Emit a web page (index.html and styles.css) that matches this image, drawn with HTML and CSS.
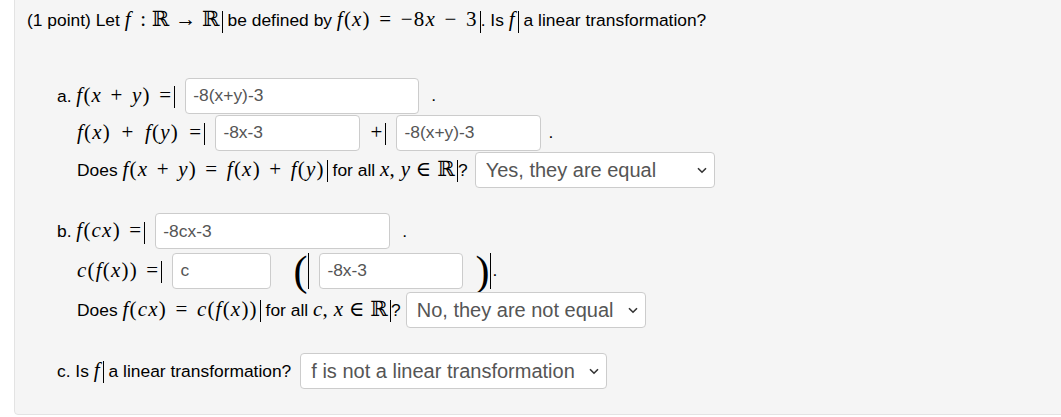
FILE: index.html
```html
<!DOCTYPE html>
<html>
	<head>
		<meta charset="utf-8">
		<meta name="viewport" content="width=device-width, initial-scale=1.0">
		<title>Linear transformation</title>
		<link rel="stylesheet" href="styles.css">
	</head>
	<body>
		<div class="problem">
			<div class="line intro">
				<span class="txt">(1 point) Let <span class="m"><i>f</i> <span class="set">: ℝ → ℝ</span></span><span class="cur"></span> be defined by <span class="m"><i>f</i>(<i>x</i>) = −8<i>x</i> − 3</span><span class="cur"></span>. Is <span class="m"><i>f</i></span><span class="cur"></span> a linear transformation?</span>
			</div>

			<!-- a -->
			<div class="part">
				<div class="line">
					<span class="txt">a. <span class="m"><i>f</i>(<i>x</i> + <i>y</i>) =</span><span class="cur"></span></span>
					<input class="ans w-a1" type="text" value="-8(x+y)-3">
					<span class="dot">.</span>
				</div>
				<div class="line sub">
					<span class="txt"><span class="m wide"><i>f</i>(<i>x</i>) + <i>f</i>(<i>y</i>) =</span><span class="cur"></span></span>
					<input class="ans w-a2" type="text" value="-8x-3">
					<span class="txt"><span class="m">+</span><span class="cur"></span></span>
					<input class="ans w-a2" type="text" value="-8(x+y)-3">
					<span class="dot tight">.</span>
				</div>
				<div class="line sub">
					<span class="txt">Does <span class="m"><i>f</i>(<i>x</i> + <i>y</i>) = <i>f</i>(<i>x</i>) + <i>f</i>(<i>y</i>)</span><span class="cur"></span> for all <span class="m set"><i>x</i>, <i>y</i> ∈ ℝ</span><span class="cur"></span>?</span>
					<span class="sel w-s1">
						<select><option>Yes, they are equal</option></select>
						<svg class="chev" width="10" height="7" viewBox="0 0 10 7"><path d="M1 1.2l4 4 4-4" fill="none" stroke="#333" stroke-width="1.6"/></svg>
					</span>
				</div>
			</div>

			<!-- b -->
			<div class="part">
				<div class="line b1">
					<span class="txt">b. <span class="m"><i>f</i>(<i>cx</i>) =</span><span class="cur"></span></span>
					<input class="ans w-b1" type="text" value="-8cx-3">
					<span class="dot">.</span>
				</div>
				<div class="line sub b2">
					<span class="txt"><span class="m"><i>c</i>(<i>f</i>(<i>x</i>)) =</span><span class="cur"></span></span>
					<input class="ans w-b2" type="text" value="c">
					<span class="big">(</span><span class="cur tall"></span>
					<input class="ans w-b3" type="text" value="-8x-3">
					<span class="big">)</span><span class="cur tall"></span><span class="dot flush">.</span>
				</div>
				<div class="line sub">
					<span class="txt">Does <span class="m"><i>f</i>(<i>cx</i>) = <i>c</i>(<i>f</i>(<i>x</i>))</span><span class="cur"></span> for all <span class="m set"><i>c</i>, <i>x</i> ∈ ℝ</span><span class="cur"></span>?</span>
					<span class="sel w-s2">
						<select><option>No, they are not equal</option></select>
						<svg class="chev" width="10" height="7" viewBox="0 0 10 7"><path d="M1 1.2l4 4 4-4" fill="none" stroke="#333" stroke-width="1.6"/></svg>
					</span>
				</div>
			</div>

			<!-- c -->
			<div class="part">
				<div class="line">
					<span class="txt">c. Is <span class="m"><i>f</i></span><span class="cur"></span> a linear transformation?</span>
					<span class="sel w-s3">
						<select><option>f is not a linear transformation</option></select>
						<svg class="chev" width="10" height="7" viewBox="0 0 10 7"><path d="M1 1.2l4 4 4-4" fill="none" stroke="#333" stroke-width="1.6"/></svg>
					</span>
				</div>
			</div>
		</div>
	</body>
</html>
```

FILE: styles.css
```css
body{
	margin: 0;
	background-color: #fff;
	overflow: hidden;
	font-family: "Liberation Sans", Arial, sans-serif;
	font-size: 17.4px;
	color: #000;
}
.problem{
	margin: -4px -20px 0 14px;
	box-sizing: border-box;
	height: 419px;
	padding: 4px 0 0 12px;
	background-color: #f5f5f5;
	border: 1px solid #e3e3e3;
	border-radius: 4px;
}
.line{
	display: flex;
	align-items: center;
	height: 37px;
	white-space: nowrap;
}
.intro{
	height: 38px;
}
.part{
	margin: 38px 0 0 30px;
}
.part + .part{
	margin-top: 24px;
}
.sub{
	padding-left: 20px;
}
.b1{
	height: 38px;
}
.b2{
	height: 41px;
}

/* math, set a bit wider than the text like TeX */
.m{
	font-family: "Liberation Serif", "DejaVu Serif", serif;
	font-size: 21px;
	letter-spacing: 1.2px;
	word-spacing: 2px;
}
.m.wide{
	word-spacing: 4px;
}
.set{
	letter-spacing: 0.3px;
	word-spacing: 0;
}
.cur{
	display: inline-block;
	width: 1px;
	height: 22px;
	margin-left: 2px;
	background-color: #000;
	vertical-align: middle;
}
.cur.tall{
	height: 36px;
	margin-left: 1px;
}
.big{
	font-family: "Liberation Serif", "DejaVu Serif", serif;
	font-size: 42px;
	line-height: 36px;
	margin-left: 12px;
}
.big + .cur{
	margin-left: 1px;
}

/* answer boxes */
.ans{
	box-sizing: border-box;
	height: 36px;
	margin: 0 10px;
	padding: 0 7px;
	border: 1px solid #ccc;
	border-radius: 4px;
	background-color: #fff;
	font-family: "Liberation Sans", Arial, sans-serif;
	font-size: 17.4px;
	color: #555;
	outline: none;
}
.w-a1{ width: 234px; }
.w-a2{ width: 145px; }
.w-b1{ width: 235px; }
.w-b2{ width: 99px; }
.w-b3{ width: 144px; margin-right: 0; }
.dot{
	margin-left: 2px;
}
.dot.tight{
	margin-left: -3px;
}
.dot.flush{
	margin-left: 1px;
}

/* drop downs */
.sel{
	position: relative;
	display: inline-flex;
	margin-left: 7px;
}
.sel select{
	-webkit-appearance: none;
	appearance: none;
	box-sizing: border-box;
	width: 100%;
	height: 36px;
	padding: 0 0 0 10px;
	border: 1px solid #ccc;
	border-radius: 4px;
	background-color: #fff;
	font-family: "Liberation Sans", Arial, sans-serif;
	font-size: 20px;
	color: #555;
	outline: none;
}
.w-s1{ width: 240px; }
.w-s2{ width: 240px; margin-left: 5px; }
.w-s3{ width: 307px; margin-left: 9px; }
.chev{
	position: absolute;
	right: 8px;
	top: 15px;
	pointer-events: none;
}
```
